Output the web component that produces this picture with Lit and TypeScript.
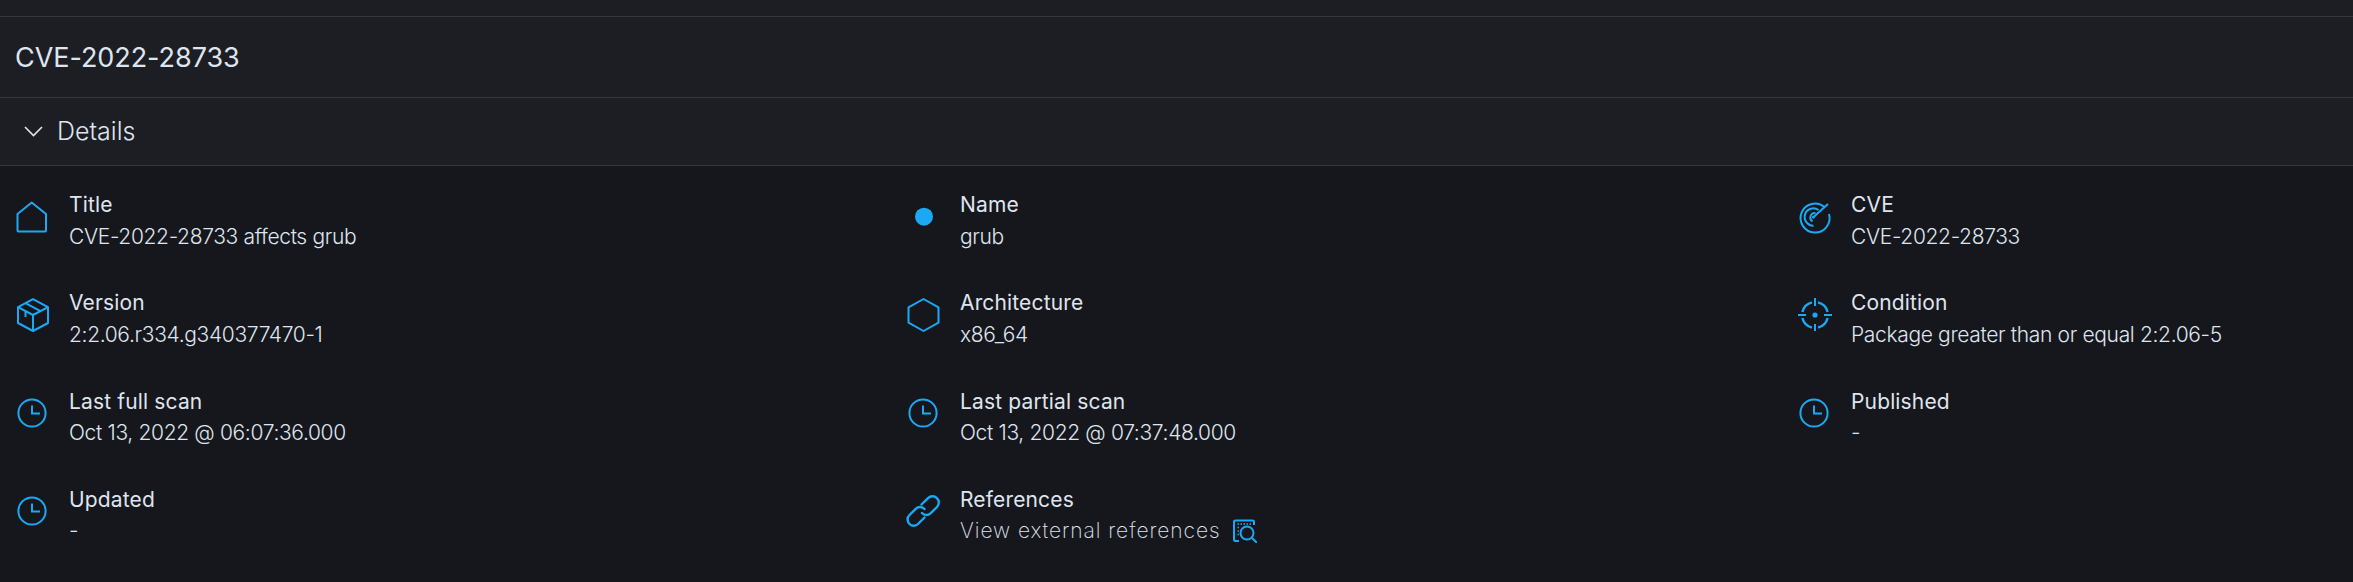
import { LitElement, html, css, svg } from "lit";
import { customElement } from "lit/decorators.js";

const clock = svg`<circle cx="16" cy="16" r="13.6"/><path d="M16 8.5V16.5H24"/>`;
const icons: Record<string, unknown> = {
  home: svg`<path d="M15.7 2.5 L30 14 V30.5 Q30 31.5 29 31.5 H2.5 Q1.5 31.5 1.5 30.5 V14 Z" stroke-linejoin="round"/>`,
  dot: svg`<circle cx="17" cy="16.7" r="9" fill="#1ba9f5" stroke="none"/>`,
  radar: svg`<path d="M26.5 7A14.5 14.5 0 1 0 31 14"/><path d="M20.5 10A8.7 8.7 0 1 0 15.5 25.7"/><path d="M17.5 13.2A4.4 4.4 0 0 0 14.5 21.3"/><path d="M15.3 17.3 L30 4"/><circle cx="15.3" cy="17.3" r="1.4" fill="#1ba9f5" stroke="none"/>`,
  box: svg`<path d="M17 1.2 L32 9.2 V25 L17 33 L2 25 V9.2 Z" stroke-linejoin="round"/><path d="M2 9.2 L17 17 L32 9.2 M17 17 V33 M9.5 5.2 L24.5 13.2 M9.5 13.2 V19"/>`,
  hex: svg`<path d="M16.5 1 L31.5 9.3 V24.7 L16.5 33 L1.5 24.7 V9.3 Z" stroke-linejoin="round"/>`,
  target: svg`<path d="M14 4.4A13 13 0 0 0 4.4 14M20 4.4A13 13 0 0 1 29.6 14M29.6 20A13 13 0 0 1 20 29.6M14 29.6A13 13 0 0 1 4.4 20" stroke-width="2.4"/><path d="M17 0V8M17 26V33M0 17H8M26 17H34"/><circle cx="17" cy="17" r="2.6" fill="#1ba9f5" stroke="none"/>`,
  clock,
  link: svg`<path d="M14.5 9.5 L21 3.2 A6 6 0 0 1 30 12 L23.5 18.4 A6 6 0 0 1 15 18" stroke-width="2.4" stroke-linecap="round"/><path d="M17.5 14 A6 6 0 0 0 9 13.6 L2.5 20 A6 6 0 0 0 11 29 L17.5 22.5" stroke-width="2.4" stroke-linecap="round"/>`,
};

type Item = { icon: string; label: string; value: string; link?: boolean };
const items: Item[] = [
  { icon: "home", label: "Title", value: "CVE-2022-28733 affects grub" },
  { icon: "dot", label: "Name", value: "grub" },
  { icon: "radar", label: "CVE", value: "CVE-2022-28733" },
  { icon: "box", label: "Version", value: "2:2.06.r334.g340377470-1" },
  { icon: "hex", label: "Architecture", value: "x86_64" },
  { icon: "target", label: "Condition", value: "Package greater than or equal 2:2.06-5" },
  { icon: "clock", label: "Last full scan", value: "Oct 13, 2022 @ 06:07:36.000" },
  { icon: "clock", label: "Last partial scan", value: "Oct 13, 2022 @ 07:37:48.000" },
  { icon: "clock", label: "Published", value: "-" },
  { icon: "clock", label: "Updated", value: "-" },
  { icon: "link", label: "References", value: "View external references", link: true },
];

@customElement("app-root")
export class AppRoot extends LitElement {
  static styles = css`
    :host {
      display: block;
      width: 2353px;
      height: 582px;
      background: #16171c;
      font-family: Inter, "Liberation Sans", sans-serif;
      color: #dfe5ef;
      overflow: hidden;
    }
    .top {
      height: 16px;
      background: #1d1e24;
      border-bottom: 1px solid #343741;
    }
    .heading {
      height: 81px;
      box-sizing: border-box;
      background: #1d1e24;
      border-bottom: 1px solid #343741;
      display: flex;
      align-items: center;
      padding: 0 0 0 15px;
      font-size: 27px;
      font-weight: 400;
      letter-spacing: -0.05px;
    }
    .accordion {
      height: 68px;
      box-sizing: border-box;
      background: #1d1e24;
      border-bottom: 1px solid #343741;
      display: flex;
      align-items: center;
      gap: 14px;
      padding: 0 0 2px 24px;
      font-size: 25px;
      font-weight: 300;
    }
    .accordion svg { display: block; margin-top: 2px; }
    .grid {
      display: grid;
      grid-template-columns: 891px 891px 1fr;
      grid-auto-rows: 98.25px;
      padding: 26px 0 0 16px;
    }
    .item {
      display: flex;
      align-items: flex-start;
      gap: 21px;
    }
    .icon {
      width: 32px;
      height: 36px;
      margin-top: 8px;
      flex: none;
      fill: none;
      stroke: #1ba9f5;
      stroke-width: 2;
      overflow: visible;
    }
    .text { display: flex; flex-direction: column; gap: 6.5px; }
    .label { font-size: 21px; line-height: 25px; font-weight: 400; letter-spacing: 0.15px; }
    .value { font-size: 21px; line-height: 25px; font-weight: 300; letter-spacing: -0.34px; display: flex; align-items: flex-start; gap: 12px; }
    .ext { letter-spacing: 0.95px; font-weight: 250; }
    .search { width: 24px; height: 24px; fill: none; stroke: #1ba9f5; stroke-width: 2; margin-top: 1px; }
  `;

  render() {
    return html`
      <div class="top"></div>
      <div class="heading">CVE-2022-28733</div>
      <div class="accordion">
        <svg width="19" height="11" viewBox="0 0 19 11" fill="none" stroke="#dfe5ef" stroke-width="1.6"><path d="M1 1 L9.5 9.5 L18 1"/></svg>
        <span>Details</span>
      </div>
      <div class="grid">
        ${items.map(
          (i) => html`<div class="item">
            <svg class="icon" viewBox="0 0 32 36">${icons[i.icon]}</svg>
            <div class="text">
              <div class="label">${i.label}</div>
              <div class="value">
                ${i.link
                  ? html`<span class="ext">${i.value}</span>
                      <svg class="search" viewBox="0 0 24 24">
                        <path d="M6 22H2.5Q1 22 1 20.5V3Q1 1.5 2.5 1.5H19.5Q21 1.5 21 3V6"/>
                        <circle cx="14" cy="14" r="6.5"/><path d="M19 19L24 24"/>
                        <path d="M4.5 5H18M4.5 8.5H7M4.5 12H6M4.5 15.5H6" stroke-dasharray="1.5 1.5" stroke-width="1.5"/>
                      </svg>`
                  : i.value}
              </div>
            </div>
          </div>`
        )}
      </div>
    `;
  }
}
